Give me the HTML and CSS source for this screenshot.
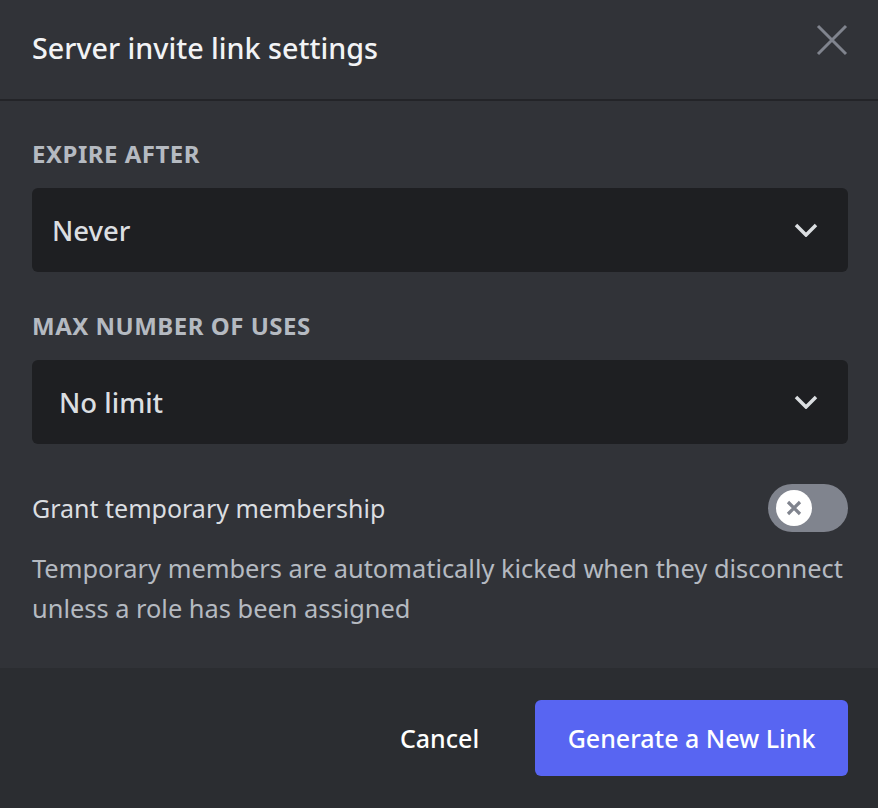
FILE: index.html
```html
<!DOCTYPE html>
<html lang="en">
<head>
<meta charset="utf-8">
<title>Server invite link settings</title>
<link rel="stylesheet" href="styles.css">
</head>
<body>
<div class="modal">
  <header class="modal-header">
    <h1 class="modal-title">Server invite link settings</h1>
    <button class="close-btn" aria-label="Close">
      <svg width="32" height="32" viewBox="0 0 32 32"><path d="M2 2L30 30M30 2L2 30" stroke="#80848e" stroke-width="3" fill="none"/></svg>
    </button>
  </header>
  <div class="modal-body">
    <div class="field">
      <div class="field-label">Expire after</div>
      <div class="select">
        <span class="select-value">Never</span>
        <svg class="chevron" width="24" height="14" viewBox="0 0 24 14"><path d="M2 2L12 12L22 2" stroke="#dbdee1" stroke-width="3.5" fill="none"/></svg>
      </div>
    </div>
    <div class="field">
      <div class="field-label">Max number of uses</div>
      <div class="select">
        <span class="select-value select-value-wide">No limit</span>
        <svg class="chevron" width="24" height="14" viewBox="0 0 24 14"><path d="M2 2L12 12L22 2" stroke="#dbdee1" stroke-width="3.5" fill="none"/></svg>
      </div>
    </div>
    <div class="toggle-row">
      <span class="toggle-label">Grant temporary membership</span>
      <div class="toggle">
        <div class="knob">
          <svg width="16" height="16" viewBox="0 0 16 16"><path d="M2 2L14 14M14 2L2 14" stroke="#80848e" stroke-width="3.2" fill="none"/></svg>
        </div>
      </div>
    </div>
    <p class="note">Temporary members are automatically kicked when they disconnect unless a role has been assigned</p>
  </div>
  <footer class="modal-footer">
    <button class="btn btn-link">Cancel</button>
    <button class="btn btn-primary">Generate a New Link</button>
  </footer>
</div>
</body>
</html>
```
FILE: styles.css
```css
* { box-sizing: border-box; }
html, body { margin: 0; padding: 0; }
body {
  background: #313338;
  font-family: "Noto Sans", "Open Sans", sans-serif;
  width: 878px;
  height: 808px;
  overflow: hidden;
}
.modal {
  width: 878px;
  height: 808px;
  display: flex;
  flex-direction: column;
  background: #313338;
}
.modal-header {
  height: 101px;
  padding: 0 30px 4px 32px;
  display: flex;
  justify-content: space-between;
  align-items: center;
  border-bottom: 2px solid #232428;
}
.modal-title {
  margin: 0;
  font-size: 28.7px;
  line-height: 36px;
  font-weight: 500;
  color: #f2f3f5;
}
.close-btn {
  align-self: flex-start;
  margin-top: 24px;
  padding: 0;
  border: 0;
  background: none;
  width: 32px;
  height: 32px;
  display: flex;
}
.modal-body {
  flex: 1;
  padding: 39px 30px 40px 32px;
}
.field { margin-bottom: 40px; }
.field-label {
  font-size: 24px;
  line-height: 28px;
  font-weight: 700;
  letter-spacing: 0.5px;
  text-transform: uppercase;
  color: #b5bac1;
  margin-bottom: 20px;
}
.select {
  height: 84px;
  background: #1e1f22;
  border-radius: 6px;
  display: flex;
  align-items: center;
  justify-content: space-between;
  padding: 0 30px 0 20px;
}
.select-value {
  font-size: 27.5px;
  font-weight: 500;
  color: #dbdee1;
}
.select-value-wide { padding-left: 7px; }
.toggle-row {
  display: flex;
  align-items: center;
  justify-content: space-between;
  height: 48px;
}
.toggle-label {
  font-size: 25px;
  color: #dbdee1;
}
.toggle {
  width: 80px;
  height: 48px;
  border-radius: 24px;
  background: #80848e;
  display: flex;
  align-items: center;
  padding-left: 8px;
}
.knob {
  width: 36px;
  height: 36px;
  border-radius: 50%;
  background: #ffffff;
  display: flex;
  align-items: center;
  justify-content: center;
}
.note {
  margin: 16px 0 0 0;
  font-size: 25.4px;
  line-height: 40px;
  color: #b5bac1;
}
.modal-footer {
  height: 140px;
  background: #2b2d31;
  display: flex;
  justify-content: flex-end;
  align-items: center;
  padding: 0 30px 0 32px;
  gap: 24px;
}
.btn {
  height: 76px;
  border: 0;
  border-radius: 6px;
  font-family: inherit;
  font-size: 25px;
  font-weight: 500;
  color: #ffffff;
  padding: 0 32px;
}
.btn-link { background: none; }
.btn-primary { background: #5865f2; padding: 0 32.5px; }
```
